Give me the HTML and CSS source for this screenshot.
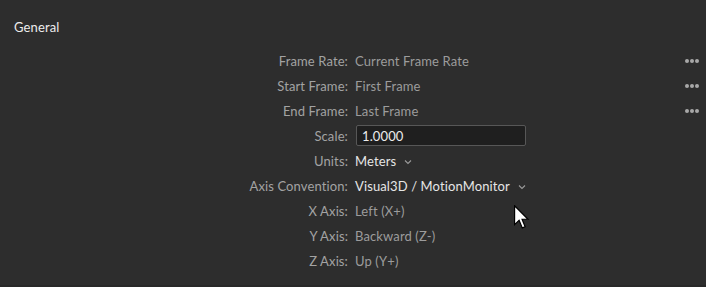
FILE: index.html
```html
<!DOCTYPE html>
<html>
<head>
<meta charset="utf-8">
<link rel="stylesheet" href="styles.css">
</head>
<body>
<div class="panel">
  <div class="header">General</div>
  <div class="grid">
    <div class="label">Frame Rate:</div>
    <div class="value dim">Current Frame Rate</div>
    <div class="more"><span></span><span></span><span></span></div>

    <div class="label">Start Frame:</div>
    <div class="value dim">First Frame</div>
    <div class="more"><span></span><span></span><span></span></div>

    <div class="label">End Frame:</div>
    <div class="value dim">Last Frame</div>
    <div class="more"><span></span><span></span><span></span></div>

    <div class="label">Scale:</div>
    <div class="value"><div class="input">1.0000</div></div>
    <div class="more"></div>

    <div class="label">Units:</div>
    <div class="value bright">Meters <svg class="chev" width="8" height="6" viewBox="0 0 8 6"><path d="M1 1.5 L4 4.5 L7 1.5" fill="none" stroke="#9a9a9a" stroke-width="1.1"/></svg></div>
    <div class="more"></div>

    <div class="label">Axis Convention:</div>
    <div class="value bright">Visual3D / MotionMonitor <svg class="chev" width="8" height="6" viewBox="0 0 8 6"><path d="M1 1.5 L4 4.5 L7 1.5" fill="none" stroke="#9a9a9a" stroke-width="1.1"/></svg></div>
    <div class="more"></div>

    <div class="label">X Axis:</div>
    <div class="value dim">Left (X+)</div>
    <div class="more"></div>

    <div class="label">Y Axis:</div>
    <div class="value dim">Backward (Z-)</div>
    <div class="more"></div>

    <div class="label">Z Axis:</div>
    <div class="value dim">Up (Y+)</div>
    <div class="more"></div>
  </div>
  <svg class="cursor" width="16" height="24" viewBox="0 0 13.5 20"><path d="M0.5 0.5 L0.5 16.5 L4.3 12.8 L7 19.2 L9.4 18.2 L6.8 11.9 L11.8 11.9 Z" fill="#ffffff" stroke="#000000" stroke-width="1"/></svg>
</div>
</body>
</html>
```
FILE: styles.css
```css
html, body {
  margin: 0;
  padding: 0;
  background: #2d2d2d;
}
.panel {
  position: relative;
  width: 706px;
  height: 287px;
  background: #2d2d2d;
  font-family: Lato, "Open Sans", sans-serif;
  font-size: 13px;
  letter-spacing: 0.12px;
  box-sizing: border-box;
  border-bottom: 2px solid #282828;
}
.header {
  display: flex;
  align-items: center;
  height: 48px;
  box-sizing: border-box;
  padding-left: 14px;
  padding-top: 6px;
  color: #ececec;
  line-height: 1;
}
.grid {
  display: grid;
  grid-template-columns: 348px 1fr 40px;
  grid-auto-rows: 25px;
  column-gap: 7px;
}
.label {
  color: #a3a3a3;
  display: flex;
  align-items: center;
  justify-content: flex-end;
}
.value {
  display: flex;
  align-items: center;
}
.dim { color: #9c9c9c; }
.bright { color: #e6e6e6; }
.chev { margin-left: 8px; margin-top: 2px; }
.input {
  width: 170px;
  height: 21px;
  box-sizing: border-box;
  background: #1f1f1f;
  border: 1px solid #575757;
  border-radius: 2px;
  color: #ececec;
  display: flex;
  align-items: center;
  padding-left: 5px;
  margin-left: 1px;
}
.more {
  display: flex;
  align-items: center;
  justify-content: flex-end;
  gap: 1px;
  padding-right: 7px;
}
.more span {
  width: 4px;
  height: 4px;
  border-radius: 50%;
  background: #a8a8a8;
}
.cursor {
  position: absolute;
  left: 514px;
  top: 205px;
}
```
